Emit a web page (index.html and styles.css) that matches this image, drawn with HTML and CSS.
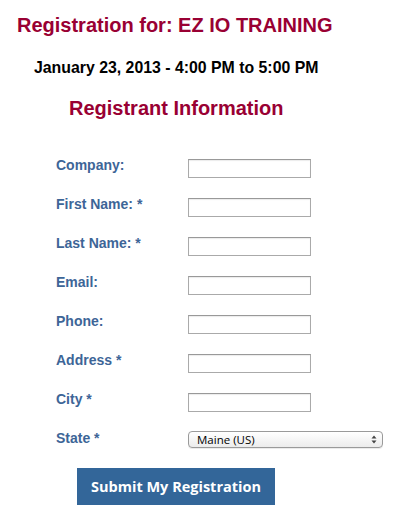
FILE: index.html
```html
<!DOCTYPE html>
<html>
<head>
<meta charset="utf-8">
<link rel="stylesheet" href="styles.css">
</head>
<body>
<div class="page">
  <h1 class="title">Registration for: EZ IO TRAINING</h1>
  <div class="date">January 23, 2013 - 4:00 PM to 5:00 PM</div>
  <h2 class="subtitle">Registrant Information</h2>
  <form class="form">
    <div class="row"><label class="label">Company:</label><input class="field" type="text"></div>
    <div class="row"><label class="label">First Name: *</label><input class="field" type="text"></div>
    <div class="row"><label class="label">Last Name: *</label><input class="field" type="text"></div>
    <div class="row"><label class="label">Email:</label><input class="field" type="text"></div>
    <div class="row"><label class="label">Phone:</label><input class="field" type="text"></div>
    <div class="row"><label class="label">Address *</label><input class="field" type="text"></div>
    <div class="row"><label class="label">City *</label><input class="field" type="text"></div>
    <div class="row"><label class="label">State *</label>
      <span class="select-wrap">
        <select class="select"><option>Maine (US)</option></select>
        <svg class="arrows" width="6" height="9" viewBox="0 0 6 9"><path d="M0.5 3.5 L3 0.5 L5.5 3.5 Z M0.5 5.5 L3 8.5 L5.5 5.5 Z" fill="#444"/></svg>
      </span>
    </div>
    <button class="submit" type="button">Submit My Registration</button>
  </form>
</div>
</body>
</html>
```
FILE: styles.css
```css
html, body {
  margin: 0;
  padding: 0;
  background: #ffffff;
}
.page {
  padding-top: 13px;
  font-family: "Liberation Sans", Arial, sans-serif;
}
.title {
  margin: 0 0 0 17px;
  font-size: 20px;
  line-height: 24px;
  font-weight: bold;
  color: #990033;
}
.date {
  margin: 21px 0 0 34px;
  font-size: 15.85px;
  line-height: 20px;
  font-weight: bold;
  color: #000000;
}
.subtitle {
  margin: 18px 0 0 69px;
  font-size: 20px;
  line-height: 24px;
  font-weight: bold;
  color: #990033;
}
.form {
  margin: 36px 0 0 56px;
  display: flex;
  flex-direction: column;
  gap: 17px;
}
.row {
  display: flex;
  align-items: flex-start;
  height: 22px;
}
.label {
  width: 132px;
  padding-top: 1px;
  font-size: 14px;
  line-height: 16px;
  font-weight: bold;
  color: #3d6597;
}
.field {
  margin: 3px 0 0 0;
  width: 123px;
  height: 19px;
  box-sizing: border-box;
  border: 1px solid #aaaaaa;
  border-top-color: #999999;
  box-shadow: inset 0 1px 1px rgba(0,0,0,0.08);
  padding: 0 3px;
  background: #ffffff;
}
.select-wrap {
  position: relative;
  margin-top: 2px;
  display: block;
}
.select {
  -webkit-appearance: none;
  appearance: none;
  display: block;
  width: 195px;
  height: 17px;
  box-sizing: border-box;
  border: 1px solid #9a9a9a;
  border-radius: 4px;
  background: linear-gradient(#ffffff, #ececec);
  box-shadow: 0 1px 0 rgba(0,0,0,0.08);
  font-family: "Open Sans", "DejaVu Sans", sans-serif;
  font-size: 11.5px;
  line-height: 15px;
  padding: 0 0 0 8px;
  margin: 0;
  color: #000000;
}
.arrows {
  position: absolute;
  right: 6px;
  top: 4px;
}
.submit {
  margin: 0 0 0 21px;
  align-self: flex-start;
  width: 198px;
  height: 37px;
  border: none;
  background: #336699;
  color: #ffffff;
  font-family: "Open Sans", "DejaVu Sans", sans-serif;
  font-weight: bold;
  font-size: 14.5px;
  padding: 0;
  text-align: center;
}
```
